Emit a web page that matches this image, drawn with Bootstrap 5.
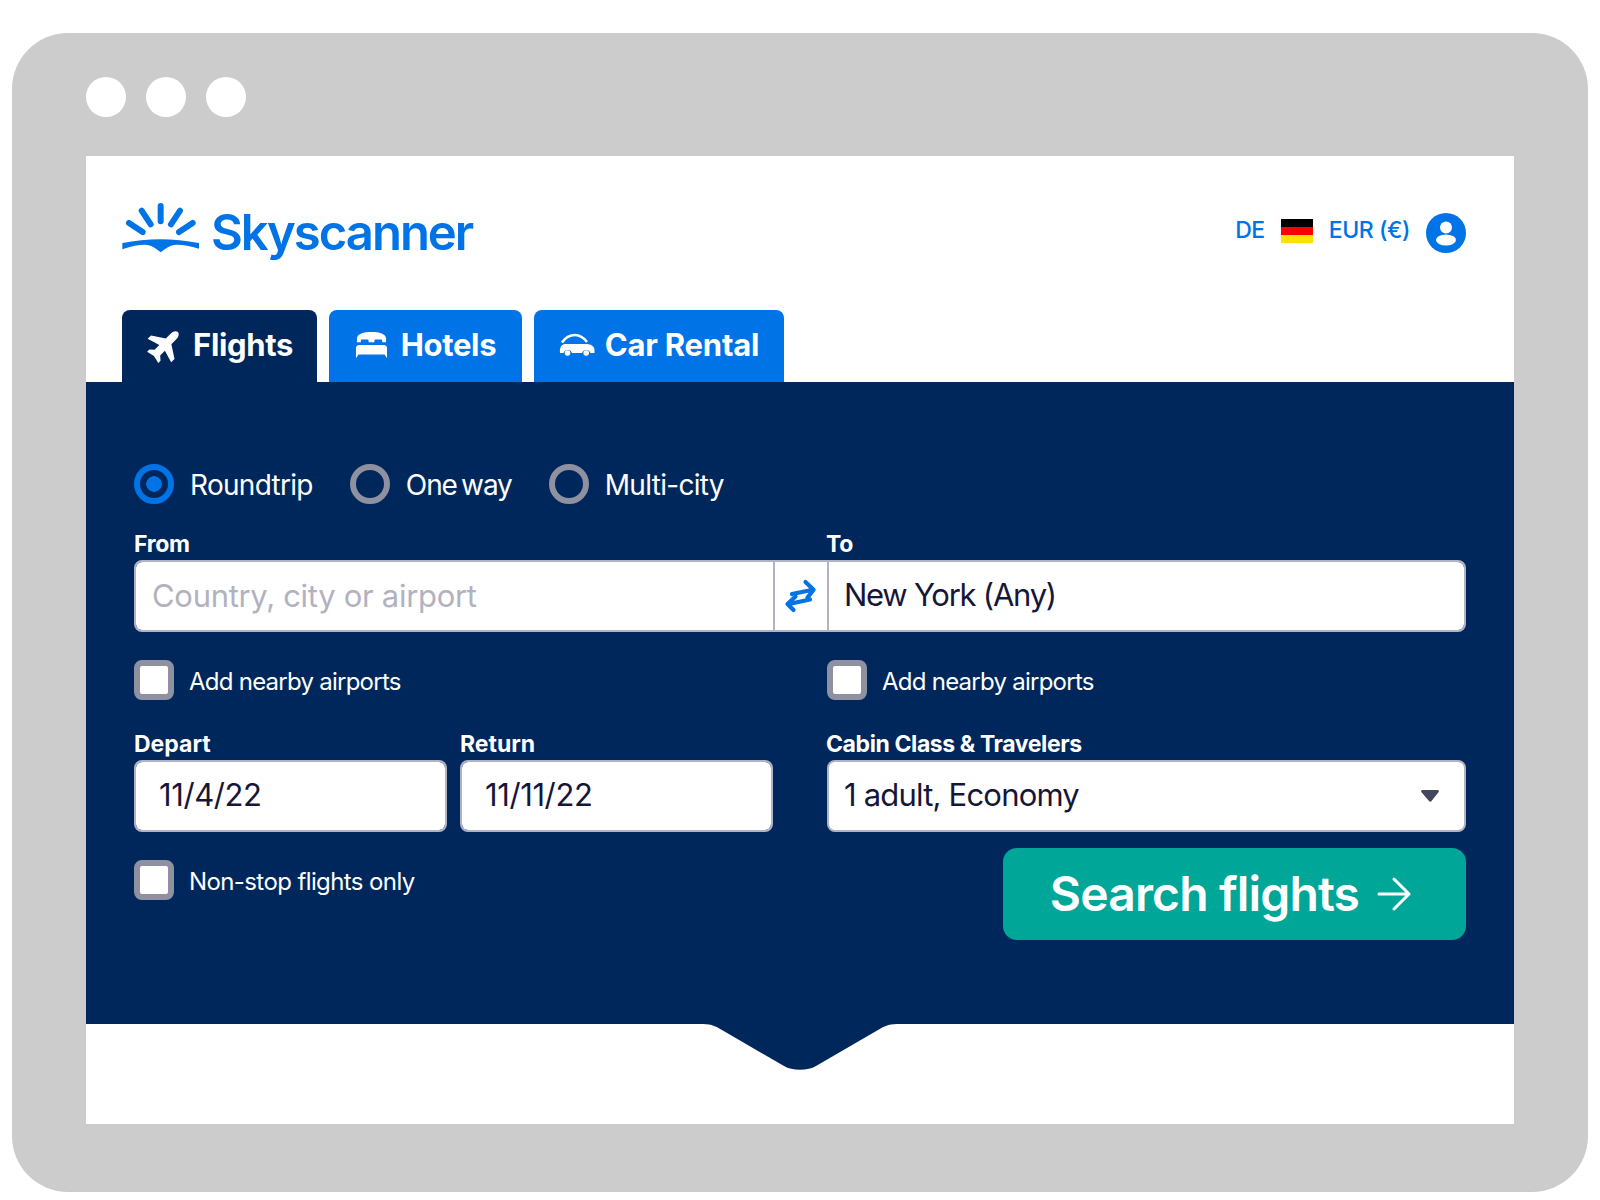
<!DOCTYPE html>
<html lang="en">
<head>
<meta charset="UTF-8">
<title>Skyscanner</title>
<link href="https://cdn.jsdelivr.net/npm/bootstrap@5.3.2/dist/css/bootstrap.min.css" rel="stylesheet">
<style>
body { background: #fff; font-family: "Inter", "Noto Sans", sans-serif; height: 1200px; overflow: hidden; }
.frame-shell { width: 1576px; height: 1159px; margin: 33px 0 0 12px; padding: 44px 74px 68px; background: #cccccc; border-radius: 56px; }
.frame-dot { width: 40px; height: 40px; background: #fff; border-radius: 50%; }
.frame-dots { gap: 20px; margin-bottom: 39px; }
.screen-area { height: 968px; background: #fff; }
.top-head { height: 154px; padding: 44px 48px 0 34px; }
.brand-mark { margin-bottom: 8px; }
.brand-name { font-size: 49px; font-weight: 600; letter-spacing: -2px; color: #0073e6; line-height: 56px; margin: 2px 0 0 9px; }
.locale-bar { color: #0073e6; font-size: 23px; font-weight: 500; letter-spacing: -.45px; margin-top: 13px; }
.locale-text { margin-bottom: 6px; }
.flag-de { width: 32px; height: 24px; margin: 0 16px 4px 16px; }
.tab-row { gap: 12px; padding-left: 36px; height: 72px; }
.tab-item { height: 72px; border-radius: 8px 8px 0 0; background: #0073e6; color: #fff; font-size: 31px; font-weight: 700; letter-spacing: -.35px; text-decoration: none; padding-bottom: 2px; }
.tab-item.is-on { background: #00275c; }
.tab-flights { width: 195px; gap: 9px; }
.tab-hotels { width: 193px; gap: 13px; }
.tab-cars { width: 250px; gap: 10px; letter-spacing: -.2px; }
.search-panel { height: 642px; background: #00275c; padding: 82px 48px 0; color: #fff; }
.trip-row { height: 40px; }
.trip-opt { margin-right: 37px; gap: 16px; font-size: 28px; letter-spacing: -.7px; }
.trip-text { padding-top: 2px; }
.trip-tight { letter-spacing: -1.1px; word-spacing: -2.5px; }
.trip-radio { width: 40px; height: 40px; margin: 0; flex: none; background: transparent; border: 6px solid #8f90a0; border-radius: 50%; appearance: none; }
.trip-radio:checked { border-color: #0073e6; background: radial-gradient(circle, #0073e6 0 7.5px, transparent 8px); }
.pair-grid { display: grid; grid-template-columns: 639px 639px; column-gap: 54px; }
.field-label { display: block; height: 30px; margin: 0; font-size: 23px; line-height: 28px; font-weight: 700; letter-spacing: -.3px; }
.date-pair .field-label { letter-spacing: 0; }
.right-label { margin-left: -1px; }
.cabin-label { letter-spacing: -.4px; }
.route-labels { margin-top: 26px; }
.route-group { height: 72px; }
.route-group .form-control, .date-input, .cabin-select { height: 72px; border: 2px solid #b2b2c5; color: #161639; font-size: 31px; font-family: inherit; letter-spacing: -.8px; box-shadow: none; }
.route-group .form-control { border-radius: 8px; padding: 0 16px 3px; }
.route-group .route-from { flex: none; width: 641px; padding-bottom: 1px; }
.route-group .route-from::placeholder { color: #b2b2bf; letter-spacing: -.3px; }
.route-group .route-to { flex: none; width: 639px; margin-left: 0 !important; padding-left: 15px; letter-spacing: -1.25px; }
.swap-cell { width: 52px; padding: 0; justify-content: center; background: #fff; border: 2px solid #b2b2c5; border-left: 0; border-right: 0; border-radius: 0; margin-left: 0 !important; }
.check-line { gap: 15px; font-size: 24px; letter-spacing: -.75px; }
.check-text { padding-top: 4px; }
.check-box { width: 40px; height: 40px; margin: 0; flex: none; background: #fff; border: 6px solid #8f90a0; border-radius: 8px; appearance: none; }
.airports-row { margin-top: 28px; }
.dates-row { margin-top: 30px; }
.date-pair { display: grid; grid-template-columns: 313px 313px; column-gap: 13px; }
.date-input { border-radius: 8px; padding: 0 23px 3px; letter-spacing: -.4px; }
.cabin-select { border-radius: 8px; padding: 0 15px 2px; background-image: url("data:image/svg+xml,%3Csvg xmlns='http://www.w3.org/2000/svg' viewBox='0 0 18 12'%3E%3Cpath d='M1.5 0h15c1.2 0 1.9 1.3 1 2.2l-7 8.8c-.8 1-1.7 1-2.5 0L.5 2.2C-.4 1.3.3 0 1.5 0z' fill='%23444560'/%3E%3C/svg%3E"); background-size: 18px 12px; background-position: right 25px center; }
.last-row { margin-top: 16px; }
.stops-check { margin-top: 12px; letter-spacing: -.6px; }
.go-btn { width: 463px; height: 92px; gap: 18px; padding: 0 8px 0 0; background: #00a698; border: 0; border-radius: 14px; color: #fff; font-size: 48px; font-weight: 600; letter-spacing: -.85px; }
.go-btn:hover { background: #00a698; color: #fff; }
.panel-notch { display: block; margin: 0 auto; }
</style>
</head>

<body class="m-0">
<div class="frame-shell">
  <div class="frame-dots d-flex">
    <span class="frame-dot"></span><span class="frame-dot"></span><span class="frame-dot"></span>
  </div>

  <div class="screen-area">
    <!-- logo + locale -->
    <header class="top-head d-flex justify-content-between align-items-start">
      <div class="d-flex align-items-center">
        <svg class="brand-mark" width="82" height="56" viewBox="60 60 246 168">
          <g stroke="#0073e6" stroke-width="18" stroke-linecap="round">
            <path d="M182 78V124M125 92L152 133M240 92L213 133M87 129L128 156M278 129L237 156"/>
          </g>
          <path d="M67 189Q180 166 297 189V206Q250 192 222 195Q205 198 182 217Q160 198 142 195Q115 192 67 208Z" fill="#0073e6"/>
        </svg>
        <span class="brand-name">Skyscanner</span>
      </div>
      <div class="locale-bar d-flex align-items-center">
        <span class="locale-text">DE</span>
        <svg class="flag-de" viewBox="0 0 32 24"><rect width="32" height="8"/><rect y="8" width="32" height="8" fill="#f00"/><rect y="16" width="32" height="8" fill="#ffe000"/></svg>
        <span class="locale-text">EUR (€)</span>
        <svg class="ms-3" width="40" height="40" viewBox="0 0 40 40"><circle cx="20" cy="20" r="20" fill="#0073e6"/><circle cx="20" cy="14.5" r="6" fill="#fff"/><ellipse cx="20" cy="27" rx="10" ry="5.5" fill="#fff"/></svg>
      </div>
    </header>

    <!-- tabs -->
    <nav class="tab-row d-flex">
      <a class="tab-item tab-flights is-on d-flex align-items-center justify-content-center" href="#">
        <svg width="38" height="38" viewBox="0 0 24 24"><path transform="rotate(45 12 12)" d="M12 .5C13.500.5 14.500 2.400 14.500 4V8.800L22.500 14V17L14.500 14.600V18.800L17 21V23L12 21.900 7 23V21L9.500 18.800V14.600L1.500 17V14L9.500 8.800V4C9.500 2.400 10.500.5 12 .5Z" fill="#fff"/></svg>
        Flights
      </a>
      <a class="tab-item tab-hotels d-flex align-items-center justify-content-center" href="#">
        <svg width="33" height="30" viewBox="0 0 34 32" preserveAspectRatio="none"><path d="M2 13V9C2 4 9 2 17 2S32 4 32 9V13H28V11.500C28 10.500 27.500 10 26.500 10H21.500C20.500 10 20 10.500 20 11.500V13H14V11.500C14 10.500 13.500 10 12.500 10H7.500C6.500 10 6 10.500 6 11.500V13Z" fill="#fff"/><path d="M4 16H30C31.500 16 33 17.500 33 19V30L30.500 26H3.500L1 30V19C1 17.500 2.500 16 4 16Z" fill="#fff"/></svg>
        Hotels
      </a>
      <a class="tab-item tab-cars d-flex align-items-center justify-content-center" href="#">
        <svg width="36" height="24" viewBox="0 0 36 24"><path d="M3 9.500C6 5 10 2 16 2 21 2 25 5 28 9" fill="none" stroke="#fff" stroke-width="2.500"/><path d="M1 20C.5 15 2 11.500 6 11H28C32 11.500 35.500 13 35.500 17V20H31.500A4.500 4.500 0 0 0 23 20H13A4.500 4.500 0 0 0 4.500 20Z" fill="#fff"/><circle cx="8.500" cy="20" r="2.800" fill="#fff"/><circle cx="27.200" cy="20" r="2.800" fill="#fff"/></svg>
        Car Rental
      </a>
    </nav>

    <!-- search -->
    <form class="search-panel">
      <div class="trip-row d-flex">
        <label class="trip-opt d-flex align-items-center"><input class="trip-radio" type="radio" name="trip" checked><span class="trip-text">Roundtrip</span></label>
        <label class="trip-opt d-flex align-items-center"><input class="trip-radio" type="radio" name="trip"><span class="trip-text trip-tight">One way</span></label>
        <label class="trip-opt d-flex align-items-center"><input class="trip-radio" type="radio" name="trip"><span class="trip-text">Multi-city</span></label>
      </div>

      <div class="pair-grid route-labels">
        <label class="field-label">From</label>
        <label class="field-label right-label">To</label>
      </div>
      <div class="input-group route-group">
        <input class="form-control route-from" type="text" placeholder="Country, city or airport">
        <span class="input-group-text swap-cell">
          <svg width="34" height="38" viewBox="0 0 34 38" fill="none" stroke="#0073e6" stroke-width="4.200" stroke-linecap="round" stroke-linejoin="round"><path d="M8 17L29 12.700M21.500 5L29.600 12.700 23.500 20.500"/><path d="M26 22.500L5 27M11.500 19.500L3.500 27 9.500 33"/></svg>
        </span>
        <input class="form-control route-to" type="text" value="New York (Any)">
      </div>

      <div class="pair-grid airports-row">
        <label class="check-line d-flex align-items-center"><input class="check-box" type="checkbox"><span class="check-text">Add nearby airports</span></label>
        <label class="check-line d-flex align-items-center"><input class="check-box" type="checkbox"><span class="check-text">Add nearby airports</span></label>
      </div>

      <div class="pair-grid dates-row">
        <div class="date-pair">
          <div><label class="field-label">Depart</label><input class="form-control date-input" type="text" value="11/4/22"></div>
          <div><label class="field-label">Return</label><input class="form-control date-input" type="text" value="11/11/22"></div>
        </div>
        <div>
          <label class="field-label right-label cabin-label">Cabin Class &amp; Travelers</label>
          <select class="form-select cabin-select"><option>1 adult, Economy</option></select>
        </div>
      </div>

      <div class="last-row d-flex justify-content-between align-items-start">
        <label class="check-line stops-check d-flex align-items-center"><input class="check-box" type="checkbox"><span class="check-text">Non-stop flights only</span></label>
        <button class="btn go-btn d-flex align-items-center justify-content-center" type="button">
          Search flights
          <svg width="34" height="34" viewBox="0 0 34 34" fill="none" stroke="#fff" stroke-width="3" stroke-linecap="round" stroke-linejoin="round"><path d="M2 17H32M17 2L32 17 17 32"/></svg>
        </button>
      </div>
    </form>
    <svg class="panel-notch" width="198" height="46" viewBox="0 0 198 46"><path d="M0 0H2C11 0 16 3 21 6L83 42C91 47 107 47 115 42L177 6C182 3 187 0 196 0H198Z" fill="#00275c"/></svg>
  </div>
</div>
</body>
</html>
